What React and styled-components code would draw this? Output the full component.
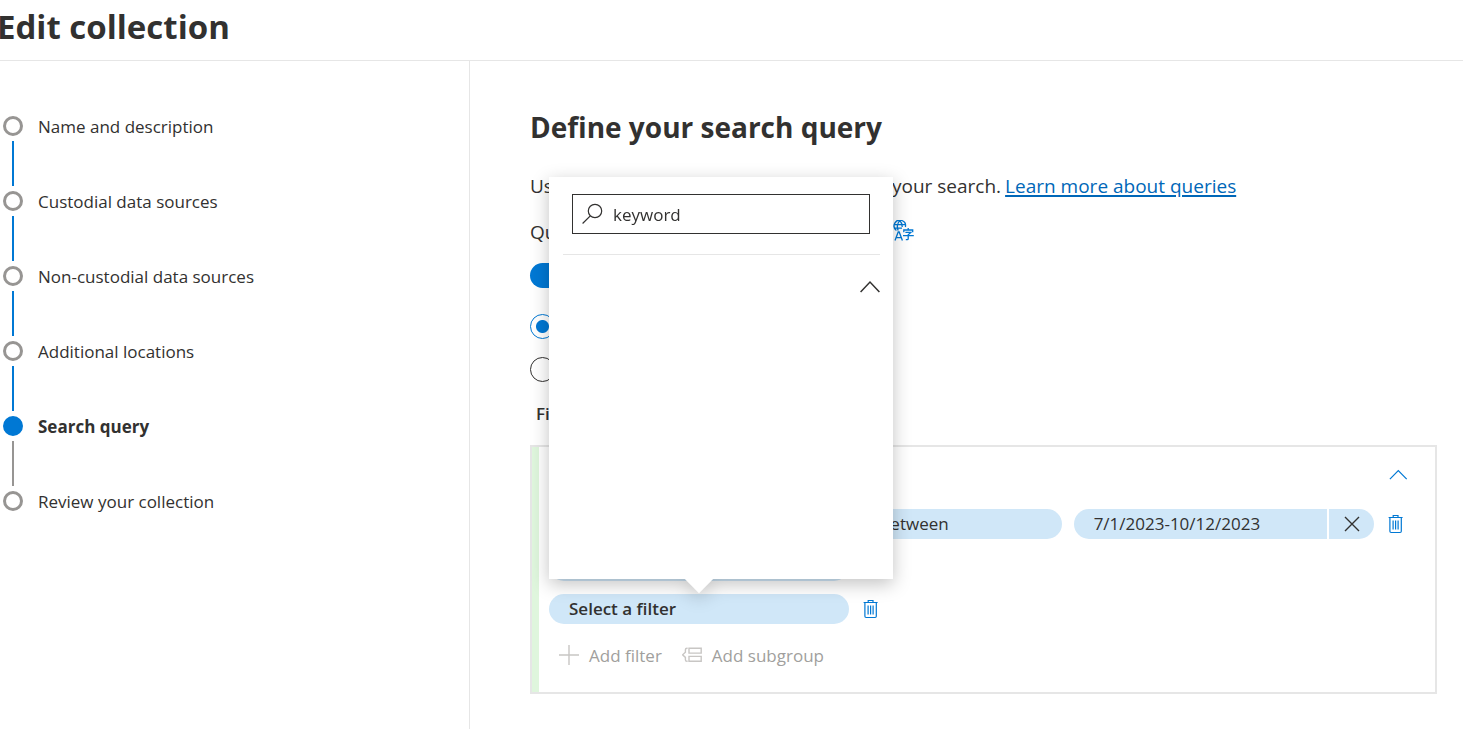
import React, { useState } from "react";
import styled, { createGlobalStyle } from "styled-components";

const GlobalStyle = createGlobalStyle`
  * {
    box-sizing: border-box;
  }

  body {
    margin: 0;
    background: #ffffff;
    color: #323130;
    font-family: "Segoe UI", "Open Sans", "Noto Sans", sans-serif;
    font-size: 17px;
    line-height: 24px;
  }

  button, input, select {
    margin: 0;
    font: inherit;
    color: inherit;
  }
`;

const Page = styled.div`
  display: flex;
  flex-direction: column;
  min-height: 100vh;
`;

const Header = styled.header`
  height: 61px;
  border-bottom: 1px solid #e6e6e6;
`;

const PageTitle = styled.h1`
  margin: 0 0 0 -3px;
  font-size: 33px;
  font-weight: 700;
  line-height: 54px;
`;

const Content = styled.div`
  display: flex;
  flex: 1;
`;

const Steps = styled.nav`
  flex: 0 0 470px;
  padding: 50px 0 0 3px;
  border-right: 1px solid #e6e6e6;
`;

const StepList = styled.ol`
  margin: 0;
  padding: 0;
  list-style: none;
`;

const Step = styled.li`
  display: flex;
  gap: 15px;
  height: 75px;
  font-weight: ${(props) => (props.$current ? 700 : 400)};
`;

const StepTrack = styled.span`
  display: flex;
  flex-direction: column;
  align-items: center;
  gap: 5px;
  padding-top: 5px;
`;

const StepDot = styled.span`
  width: 20px;
  height: 20px;
  border: 3px solid ${(props) => (props.$current ? "#0078d4" : "#979593")};
  border-radius: 50%;
  background: ${(props) => (props.$current ? "#0078d4" : "#ffffff")};
`;

const StepLine = styled.span`
  width: 2px;
  height: 45px;
  background: ${(props) => (props.$done ? "#0078d4" : "#979593")};
`;

const StepLabel = styled.span`
  padding-top: 4px;
`;

const Main = styled.main`
  flex: 1;
  padding: 47px 26px 0 60px;
`;

const Title = styled.h2`
  margin: 0;
  font-size: 28px;
  font-weight: 700;
  line-height: 38px;
`;

const Intro = styled.p`
  display: flex;
  margin: 26px 0 0;
  font-size: 19px;
  line-height: 28px;
  white-space: nowrap;
`;

const IntroLead = styled.span`
  width: 362px;
`;

const Link = styled.a`
  margin-left: 4px;
  color: #0067b8;
  text-decoration-thickness: 2px;
  text-underline-offset: 2px;
`;

const Language = styled.div`
  display: flex;
  align-items: flex-start;
  margin-top: 18px;
  font-size: 19px;
  line-height: 28px;
`;

const LanguageLabel = styled.span`
  width: 363px;
`;

const IconButton = styled.button`
  display: flex;
  align-items: center;
  justify-content: center;
  padding: 0;
  border: 0;
  background: none;
  color: ${(props) => props.$color || "#0078d4"};
`;

const LanguageButton = styled(IconButton)`
  margin-top: 2px;
`;

const Switch = styled.input`
  display: block;
  appearance: none;
  width: 50px;
  height: 25px;
  margin: 17px 0 0;
  border-radius: 13px;
  background: #0078d4;
`;

const Choices = styled.div`
  display: flex;
  flex-direction: column;
  gap: 18px;
  margin-top: 26px;
`;

const Choice = styled.label`
  display: flex;
  align-items: center;
  gap: 10px;
  height: 25px;
`;

const Radio = styled.input`
  appearance: none;
  width: 25px;
  height: 25px;
  border: 1px solid #323130;
  border-radius: 50%;

  &:checked {
    border-color: #0078d4;
    background: radial-gradient(circle, #0078d4 6px, transparent 7px);
  }
`;

const FiltersTitle = styled.h3`
  margin: 20px 0 0 6px;
  font-size: 17px;
  font-weight: 600;
  line-height: 24px;
`;

const Card = styled.section`
  margin-top: 19px;
  border: 2px solid #e6e6e6;
`;

const CardBody = styled.div`
  padding: 18px 27px 24px 10px;
  border-left: 7px solid #dff6dd;
`;

const CardTop = styled.div`
  display: flex;
  justify-content: flex-end;
  margin-bottom: 24px;
`;

const Condition = styled.div`
  display: grid;
  grid-template-columns: 3fr 2fr 3fr 20px;
  gap: 12px;
  margin-top: ${(props) => props.$top || 0}px;
  padding-right: 2px;
`;

const FilterCell = styled.div`
  position: relative;
`;

const TrashCell = styled.div`
  display: flex;
  align-items: center;
  padding-left: 2px;
`;

const Pill = styled.button`
  width: 100%;
  height: 30px;
  padding: 0 20px;
  border: 0;
  border-radius: 15px;
  background: #d0e7f8;
  font-weight: ${(props) => (props.$strong ? 600 : 400)};
  text-align: left;
`;

const PillSelect = styled.select`
  appearance: none;
  width: 100%;
  height: 30px;
  padding: 0 18px;
  border: 0;
  border-radius: 15px;
  background: #d0e7f8;
`;

const SplitPill = styled.div`
  display: flex;
  gap: 2px;
`;

const PillValue = styled(Pill)`
  flex: 1;
  border-radius: 15px 0 0 15px;
`;

const PillClear = styled(IconButton)`
  width: 45px;
  height: 30px;
  border-radius: 0 15px 15px 0;
  background: #d0e7f8;
`;

const Actions = styled.div`
  display: flex;
  gap: 20px;
  margin: 20px 0 0 10px;
`;

const ActionButton = styled.button`
  display: flex;
  align-items: center;
  gap: 10px;
  padding: 0;
  border: 0;
  background: none;
  color: #a19f9d;

  svg {
    margin-bottom: 2px;
    color: #c8c6c4;
  }
`;

const Callout = styled.div`
  position: absolute;
  bottom: calc(100% + 15px);
  left: 0;
  z-index: 1;
  width: 344px;
  height: 402px;
  filter: drop-shadow(0 5px 9px rgba(0, 0, 0, 0.24));
`;

const CalloutBeak = styled.span`
  position: absolute;
  bottom: -10px;
  left: 140px;
  width: 20px;
  height: 20px;
  background: #ffffff;
  transform: rotate(45deg);
`;

const CalloutBody = styled.div`
  position: relative;
  height: 100%;
  padding: 17px 13px 0 14px;
  background: #ffffff;
`;

const SearchBox = styled.label`
  display: flex;
  align-items: center;
  gap: 9px;
  height: 40px;
  margin: 0 10px 20px 9px;
  padding: 0 9px;
  border: 1px solid #323130;
`;

const SearchInput = styled.input`
  flex: 1;
  min-width: 0;
  padding: 2px 0 0;
  border: 0;
  outline: 0;
  background: none;
`;

const CalloutGroup = styled.div`
  display: flex;
  justify-content: flex-end;
  padding-top: 25px;
  border-top: 1px solid #e6e6e6;
`;

const Svg = ({ width, height, stroke = 1, children }) => (
  <svg
    width={width}
    height={height}
    viewBox={`0 0 ${width} ${height}`}
    fill="none"
    stroke="currentColor"
    strokeWidth={stroke}
    aria-hidden="true"
  >
    {children}
  </svg>
);

const SearchIcon = () => (
  <Svg width={22} height={22} stroke={1.2}>
    <circle cx="13" cy="8" r="6.7" />
    <path d="M8.3 12.8 0.6 20.5" />
  </Svg>
);

const ChevronUpIcon = () => (
  <Svg width={20} height={13} stroke={1.5}>
    <path d="M0.6 12 10 2 19.4 12" />
  </Svg>
);

const SmallChevronUpIcon = () => (
  <Svg width={20} height={20} stroke={1.2}>
    <path d="M1.9 14.2 10.3 5.6 18.7 14.2" />
  </Svg>
);

const TrashIcon = () => (
  <Svg width={16} height={20} stroke={1.2}>
    <path d="M0.6 3.5h14M5.2 3.4V1.5h4.8v1.9M1.9 3.5v13.8q0 1.2 1.2 1.2h9q1.2 0 1.2-1.2V3.5" />
    <path d="M5.1 6.4v9M7.6 6.4v9M10.1 6.4v9" />
  </Svg>
);

const CloseIcon = () => (
  <Svg width={16} height={16} stroke={1.4}>
    <path d="M1 1l14 14M15 1L1 15" />
  </Svg>
);

const PlusIcon = () => (
  <Svg width={20} height={20} stroke={1.4}>
    <path d="M10 0v20M0 10h20" />
  </Svg>
);

const SubgroupIcon = () => (
  <Svg width={20} height={16} stroke={1.4}>
    <path d="M7 1.2h12.2v4.9H7zM7 9.4h12.2v4.9H7z" />
    <path d="M5.6 1.2H5q-1.6 0-1.6 1.6v2.4L0.6 7.8l2.8 2.6v2.3q0 1.6 1.6 1.6h.6" />
  </Svg>
);

const TranslateIcon = () => (
  <Svg width={21} height={21} stroke={1.3}>
    <path d="M3.4 10.4A5.7 5.7 0 1 1 12.4 7M1 4.6h11.4M1 8.2h8M6.8.8C3.9 3.2 3.9 7.6 5.2 10.4M6.8.8c1.9 1.6 2.5 3.6 2.4 6.2" />
    <path d="M2 20.4 5.2 12h1l3.2 8.4M3.2 17.6h5" />
    <path d="M15.2 8v2M10.8 12.2V10h8.9v2.2M12.4 12.4h5.4l-2.6 2.4v4q0 .9-.9.9h-1.5M10 15.6h10.8" />
  </Svg>
);

const steps = [
  { label: "Name and description", done: true },
  { label: "Custodial data sources", done: true },
  { label: "Non-custodial data sources", done: true },
  { label: "Additional locations", done: true },
  { label: "Search query", current: true },
  { label: "Review your collection" },
];

function StepNav() {
  return (
    <Steps aria-label="Steps">
      <StepList>
        {steps.map((step, index) => (
          <Step
            key={step.label}
            $current={step.current}
            aria-current={step.current ? "step" : undefined}
          >
            <StepTrack>
              <StepDot $current={step.current} />
              {index < steps.length - 1 && <StepLine $done={step.done} />}
            </StepTrack>
            <StepLabel>{step.label}</StepLabel>
          </Step>
        ))}
      </StepList>
    </Steps>
  );
}

function FilterCallout() {
  const [keyword, setKeyword] = useState("keyword");
  return (
    <Callout>
      <CalloutBeak />
      <CalloutBody>
        <SearchBox>
          <SearchIcon />
          <SearchInput
            type="text"
            aria-label="Search filters"
            value={keyword}
            onChange={(e) => setKeyword(e.target.value)}
          />
        </SearchBox>
        <CalloutGroup>
          <IconButton type="button" $color="#323130" aria-label="Collapse">
            <ChevronUpIcon />
          </IconButton>
        </CalloutGroup>
      </CalloutBody>
    </Callout>
  );
}

function QueryBuilder() {
  return (
    <Card>
      <CardBody>
        <CardTop>
          <IconButton type="button" aria-label="Collapse group">
            <SmallChevronUpIcon />
          </IconButton>
        </CardTop>
        <Condition>
          <Pill type="button" $strong>
            Date
          </Pill>
          <PillSelect aria-label="Operator" defaultValue="between">
            <option value="between">Between</option>
          </PillSelect>
          <SplitPill>
            <PillValue type="button">7/1/2023-10/12/2023</PillValue>
            <PillClear type="button" $color="#323130" aria-label="Clear">
              <CloseIcon />
            </PillClear>
          </SplitPill>
          <IconButton type="button" aria-label="Delete filter">
            <TrashIcon />
          </IconButton>
        </Condition>
        <Condition $top={12}>
          <Pill type="button">AND</Pill>
        </Condition>
        <Condition $top={13}>
          <FilterCell>
            <Pill type="button" $strong aria-expanded="true">
              Select a filter
            </Pill>
            <FilterCallout />
          </FilterCell>
          <TrashCell>
            <IconButton type="button" aria-label="Delete filter">
              <TrashIcon />
            </IconButton>
          </TrashCell>
        </Condition>
        <Actions>
          <ActionButton type="button">
            <PlusIcon />
            Add filter
          </ActionButton>
          <ActionButton type="button">
            <SubgroupIcon />
            Add subgroup
          </ActionButton>
        </Actions>
      </CardBody>
    </Card>
  );
}

function App() {
  return (
    <Page>
      <GlobalStyle />
      <Header>
        <PageTitle>Edit collection</PageTitle>
      </Header>
      <Content>
        <StepNav />
        <Main>
          <Title>Define your search query</Title>
          <Intro>
            <IntroLead>Use the query builder to define</IntroLead>
            your search.
            <Link href="#queries">Learn more about queries</Link>
          </Intro>
          <Language>
            <LanguageLabel>Query language: None</LanguageLabel>
            <LanguageButton type="button" aria-label="Query language">
              <TranslateIcon />
            </LanguageButton>
          </Language>
          <Switch type="checkbox" role="switch" aria-label="Query builder" defaultChecked />
          <Choices>
            <Choice>
              <Radio type="radio" name="editor" defaultChecked />
              Query builder
            </Choice>
            <Choice>
              <Radio type="radio" name="editor" />
              KQL editor
            </Choice>
          </Choices>
          <FiltersTitle>Filters</FiltersTitle>
          <QueryBuilder />
        </Main>
      </Content>
    </Page>
  );
}

export default App;
